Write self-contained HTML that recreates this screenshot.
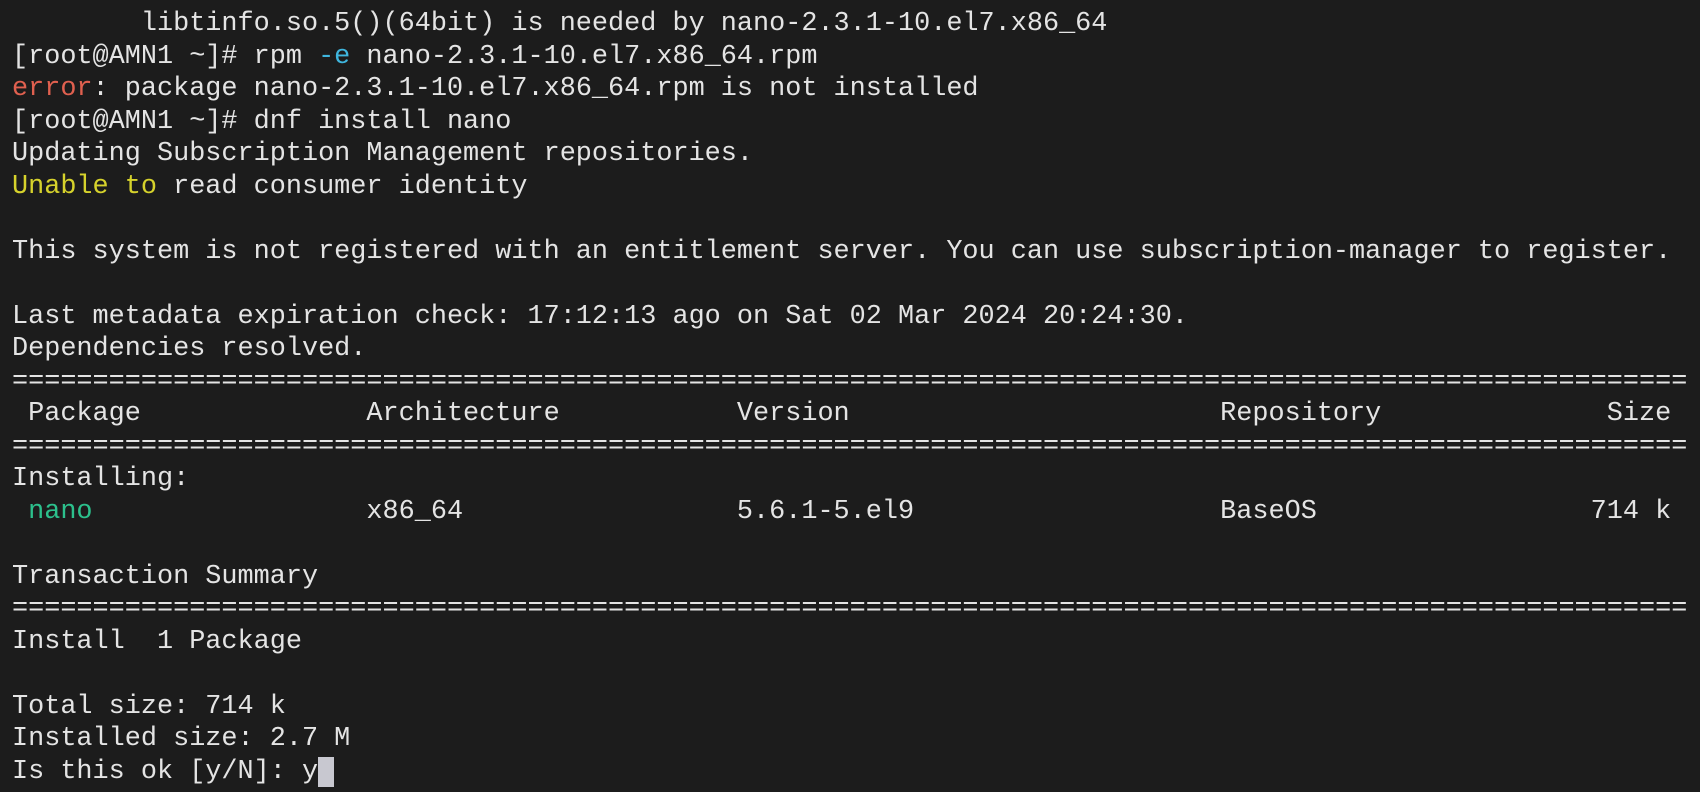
<!DOCTYPE html>
<html><head><meta charset="utf-8"><style>
html,body{margin:0;padding:0;background:#1c1c1c;width:1700px;height:792px;overflow:hidden}
pre{margin:0;position:absolute;left:12px;top:8px;font-family:"Liberation Mono",monospace;font-size:26.85px;line-height:32.5px;color:#e4e4e4;white-space:pre}
.r{color:#e0604f}.c{color:#3fb6de}.y{color:#d6d22c}.g{color:#2cc08c}
.cur{background:#c8c8d0;color:#1c1c1c}
</style></head><body>
<pre>        libtinfo.so.5()(64bit) is needed by nano-2.3.1-10.el7.x86_64
[root@AMN1 ~]# rpm <span class="c">-e</span> nano-2.3.1-10.el7.x86_64.rpm
<span class="r">error</span>: package nano-2.3.1-10.el7.x86_64.rpm is not installed
[root@AMN1 ~]# dnf install nano
Updating Subscription Management repositories.
<span class="y">Unable to</span> read consumer identity

This system is not registered with an entitlement server. You can use subscription-manager to register.

Last metadata expiration check: 17:12:13 ago on Sat 02 Mar 2024 20:24:30.
Dependencies resolved.
========================================================================================================
 Package              Architecture           Version                       Repository              Size
========================================================================================================
Installing:
 <span class="g">nano</span>                 x86_64                 5.6.1-5.el9                   BaseOS                 714 k

Transaction Summary
========================================================================================================
Install  1 Package

Total size: 714 k
Installed size: 2.7 M
Is this ok [y/N]: y<span class="cur"> </span></pre>
</body></html>
